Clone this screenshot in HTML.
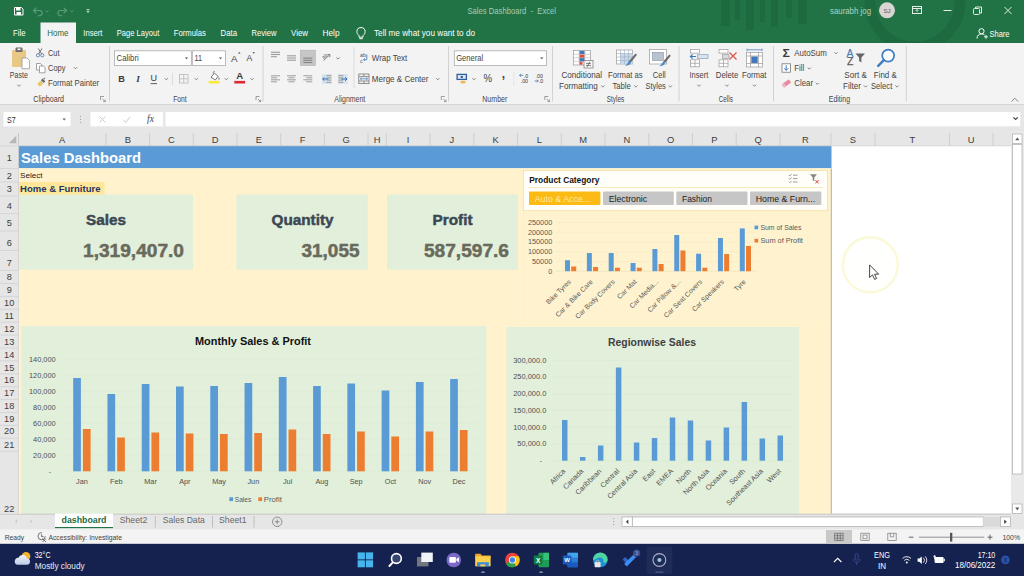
<!DOCTYPE html>
<html lang="en">
<head>
<meta charset="utf-8">
<title>Sales Dashboard - Excel</title>
<style>
html,body{margin:0;padding:0;width:1024px;height:576px;overflow:hidden;background:#fff;}
svg{display:block;font-family:"Liberation Sans",sans-serif;}
text{white-space:pre;}
</style>
</head>
<body>
<svg width="1024" height="576" viewBox="0 0 1024 576">
<!-- p1_skeleton -->
<g id="backgrounds">
<rect x="0" y="0" width="1024" height="43" fill="#217346" />
<rect x="0" y="43" width="1024" height="61.5" fill="#f3f3f3" />
<rect x="0" y="104.5" width="1024" height="26.5" fill="#e6e6e6" />
<rect x="0" y="104" width="1024" height="1" fill="#d6d6d6" />
<rect x="0" y="131" width="1024" height="15.5" fill="#e6e6e6" />
<rect x="0" y="145.8" width="18.5" height="367.7" fill="#e6e6e6" />
<rect x="18.5" y="145.8" width="993" height="367.7" fill="#ffffff" />
<rect x="1011" y="131" width="13" height="382.5" fill="#e9e9e9" />
<rect x="0" y="513.5" width="1024" height="16.2" fill="#e6e6e6" />
<rect x="0" y="529.7" width="1024" height="14.1" fill="#f3f3f3" />
<rect x="0" y="543.8" width="1024" height="32.2" fill="#15224f" />
</g>
<g id="dashboard-blocks">
<rect x="18.5" y="145.8" width="813" height="22.5" fill="#5b9bd5" />
<rect x="18.5" y="168.3" width="813" height="345.5" fill="#fff2cc" />
<rect x="18.5" y="182" width="86" height="14" fill="#ffe699" />
<rect x="19" y="194.5" width="174" height="75.2" fill="#e2efda" />
<rect x="236.4" y="194.5" width="131.3" height="75.2" fill="#e2efda" />
<rect x="387" y="194.5" width="131" height="75.2" fill="#e2efda" />
<rect x="21" y="326" width="465.3" height="187.8" fill="#e2efda" />
<rect x="506.4" y="327" width="292.6" height="186.8" fill="#e2efda" />
</g>
<!-- p2_titlebar -->
<g id="titlebar">
<g opacity="0.07" fill="#000"><rect x="721" y="0" width="9" height="26"/><rect x="735" y="0" width="5" height="20"/><rect x="746" y="0" width="8" height="30"/><rect x="760" y="0" width="5" height="22"/><rect x="771" y="0" width="7" height="27"/><rect x="786" y="0" width="6" height="18"/><rect x="798" y="0" width="9" height="24"/><clipPath id="tbclip"><rect x="0" y="0" width="1024" height="43"/></clipPath><circle cx="915" cy="2" r="45" fill="none" stroke="#000" stroke-width="11" clip-path="url(#tbclip)"/></g>
<g fill="none" stroke="#fff" stroke-width="1"><path d="M14.5 7.5h7l1.5 1.5v6h-8.5z"/></g><rect x="16" y="7.5" width="4.5" height="3" fill="#fff"/><rect x="16.5" y="12" width="4.5" height="3" fill="#fff"/>
<g fill="none" stroke="#5c9c7b" stroke-width="1.1" stroke-linecap="round"><path d="M34 10.5h5.5a2.6 2.6 0 0 1 0 5.2h-1.5"/><path d="M36 8l-2.5 2.5 2.5 2.5"/><path d="M66 10.5h-5.5a2.6 2.6 0 0 0 0 5.2h1.5"/><path d="M64 8l2.5 2.5-2.5 2.5"/></g>
<path d="M45.5 10.5l1.5 1.5 1.5-1.5" fill="none" stroke="#5f9d7d" stroke-width="0.8"/>
<path d="M70.5 10.5l1.5 1.5 1.5-1.5" fill="none" stroke="#5f9d7d" stroke-width="0.8"/>
<rect x="86.5" y="9.3" width="3" height="0.9" fill="#e8f2ec"/><path d="M86.5 11.3h3l-1.5 1.6z" fill="#e8f2ec"/>
<text x="467.5" y="10.6" font-size="8.6" fill="#a8ccb7" text-anchor="start" font-weight="normal" dominant-baseline="central" textLength="88.5" lengthAdjust="spacingAndGlyphs" >Sales Dashboard  -  Excel</text>
<text x="830" y="10.6" font-size="8.6" fill="#b4d3c1" text-anchor="start" font-weight="normal" dominant-baseline="central" textLength="41" lengthAdjust="spacingAndGlyphs" >saurabh jog</text>
<circle cx="887" cy="10.3" r="8" fill="#d9d5d1"/>
<text x="887" y="10.6" font-size="6.2" fill="#5a5a5a" text-anchor="middle" font-weight="normal" dominant-baseline="central" >SJ</text>
<g fill="none" stroke="#e4efe8" stroke-width="1"><rect x="912.5" y="6.5" width="9" height="7"/><path d="M912.5 8.5h9"/><path d="M917 12.2v-2.6M915.6 10.8l1.4-1.4 1.4 1.4" stroke-width="0.8"/><path d="M943.5 10.5h8"/><rect x="973.5" y="8.5" width="6" height="6" rx="1"/><path d="M975.5 8.5v-1.5h6v6h-1.5"/><path d="M1004.5 7l7 7M1011.5 7l-7 7"/></g>
</g>
<g id="ribbon-tabs">
<rect x="40.5" y="22.5" width="35.5" height="21" fill="#f3f3f3" />
<text x="13" y="33" font-size="8.8" fill="#ffffff" text-anchor="start" font-weight="normal" dominant-baseline="central" textLength="12.5" lengthAdjust="spacingAndGlyphs" >File</text>
<text x="47.3" y="33" font-size="8.8" fill="#1f6b41" text-anchor="start" font-weight="normal" dominant-baseline="central" textLength="21.2" lengthAdjust="spacingAndGlyphs" >Home</text>
<text x="83.3" y="33" font-size="8.8" fill="#ffffff" text-anchor="start" font-weight="normal" dominant-baseline="central" textLength="19" lengthAdjust="spacingAndGlyphs" >Insert</text>
<text x="116.8" y="33" font-size="8.8" fill="#ffffff" text-anchor="start" font-weight="normal" dominant-baseline="central" textLength="42.5" lengthAdjust="spacingAndGlyphs" >Page Layout</text>
<text x="173.8" y="33" font-size="8.8" fill="#ffffff" text-anchor="start" font-weight="normal" dominant-baseline="central" textLength="32" lengthAdjust="spacingAndGlyphs" >Formulas</text>
<text x="220.5" y="33" font-size="8.8" fill="#ffffff" text-anchor="start" font-weight="normal" dominant-baseline="central" textLength="16.5" lengthAdjust="spacingAndGlyphs" >Data</text>
<text x="251.5" y="33" font-size="8.8" fill="#ffffff" text-anchor="start" font-weight="normal" dominant-baseline="central" textLength="25" lengthAdjust="spacingAndGlyphs" >Review</text>
<text x="291" y="33" font-size="8.8" fill="#ffffff" text-anchor="start" font-weight="normal" dominant-baseline="central" textLength="17" lengthAdjust="spacingAndGlyphs" >View</text>
<text x="322.5" y="33" font-size="8.8" fill="#ffffff" text-anchor="start" font-weight="normal" dominant-baseline="central" textLength="17" lengthAdjust="spacingAndGlyphs" >Help</text>
<g fill="none" stroke="#fff" stroke-width="1"><path d="M359 35.5c-1.6-1.4-2.1-2.5-2.1-3.8a4.1 4.1 0 0 1 8.2 0c0 1.3-.5 2.4-2.1 3.8v1.7h-4z"/><path d="M359.3 38.7h3.4"/></g>
<text x="374" y="33" font-size="8.8" fill="#ffffff" text-anchor="start" font-weight="normal" dominant-baseline="central" textLength="101" lengthAdjust="spacingAndGlyphs" >Tell me what you want to do</text>
<g fill="none" stroke="#fff" stroke-width="1"><circle cx="981.5" cy="31.2" r="2.6"/><path d="M977 38.5c0-3 2-4.6 4.5-4.6 1.4 0 2.3.4 3 1"/><path d="M984 36.8h4M986 34.8v4" stroke-width="0.9"/></g>
<text x="989.5" y="33.5" font-size="8.8" fill="#ffffff" text-anchor="start" font-weight="normal" dominant-baseline="central" textLength="20" lengthAdjust="spacingAndGlyphs" >Share</text>
</g>
<!-- p3_ribbon -->
<g id="ribbon">
<g id="grp-clipboard">
<rect x="12" y="50" width="14" height="17" rx="1" fill="#e9c886"/><rect x="15.5" y="47.5" width="7" height="4.5" rx="1" fill="#6d6d6d"/><rect x="17.5" y="48.5" width="3" height="1.6" fill="#f3f3f3"/><path d="M22 58h5l2.5 2.5v8.2h-7.5z" fill="#fff" stroke="#8c8c8c" stroke-width="0.7"/>
<text x="18.8" y="75" font-size="8.8" fill="#444444" text-anchor="middle" font-weight="normal" dominant-baseline="central" textLength="18" lengthAdjust="spacingAndGlyphs" >Paste</text>
<path d="M17.4 84.7l1.6 1.6 1.6 -1.6" fill="none" stroke="#666" stroke-width="0.8"/>
<g fill="none" stroke="#5d7fa8" stroke-width="0.9"><circle cx="38" cy="55.3" r="1.6"/><circle cx="42.3" cy="55.3" r="1.6"/></g><path d="M38.6 54l3.4-5.5M41.7 54l-3.4-5.5" stroke="#666" stroke-width="0.9" fill="none"/>
<text x="48" y="52.7" font-size="8.8" fill="#444444" text-anchor="start" font-weight="normal" dominant-baseline="central" textLength="11.5" lengthAdjust="spacingAndGlyphs" >Cut</text>
<g fill="#fff" stroke="#8a8a8a" stroke-width="0.8"><path d="M36.5 63.5h4l1.5 1.5v5h-5.5z"/><path d="M39.5 66h4l1.5 1.5v5.3h-5.5z"/></g>
<text x="48" y="68" font-size="8.8" fill="#444444" text-anchor="start" font-weight="normal" dominant-baseline="central" textLength="17.5" lengthAdjust="spacingAndGlyphs" >Copy</text>
<path d="M73.9 67.2l1.6 1.6 1.6 -1.6" fill="none" stroke="#666" stroke-width="0.8"/>
<path d="M37.200 84l3.300-3.300 2.700 2.700-3.300 3.300z" fill="#e6c862"/><path d="M40.900 80.300l1.700-1.700 2.700 2.700-1.700 1.700z" fill="#6a6a6a"/><path d="M43.700 79.200l1.300-1.300" stroke="#6a6a6a" stroke-width="1.100"/>
<text x="48" y="83.3" font-size="8.8" fill="#444444" text-anchor="start" font-weight="normal" dominant-baseline="central" textLength="51" lengthAdjust="spacingAndGlyphs" >Format Painter</text>
<text x="48.7" y="99" font-size="8.3" fill="#444444" text-anchor="middle" font-weight="normal" dominant-baseline="central" textLength="30.7" lengthAdjust="spacingAndGlyphs" >Clipboard</text>
<g fill="none" stroke="#777" stroke-width="0.7"><path d="M100.5 100v-3.5h3.5"/><path d="M102.5 99l2.5 2.5M105.2 99.6v2h-2"/></g>
<line x1="109.5" y1="46" x2="109.5" y2="101.5" stroke="#d2d2d2" stroke-width="1" />
</g>
<g id="grp-font">
<rect x="114.5" y="50.8" width="76.8" height="14.7" fill="#fff" stroke="#ababab" stroke-width="0.8"/>
<rect x="192.3" y="50.8" width="33.2" height="14.7" fill="#fff" stroke="#ababab" stroke-width="0.8"/>
<text x="116.5" y="58.2" font-size="8.8" fill="#444444" text-anchor="start" font-weight="normal" dominant-baseline="central" textLength="22.3" lengthAdjust="spacingAndGlyphs" >Calibri</text>
<path d="M184.8 57.45h3.4l-1.7 1.7z" fill="#555"/>
<text x="194.5" y="58.2" font-size="8.8" fill="#444444" text-anchor="start" font-weight="normal" dominant-baseline="central" textLength="7.5" lengthAdjust="spacingAndGlyphs" >11</text>
<path d="M218.8 57.45h3.4l-1.7 1.7z" fill="#555"/>
<text x="231" y="58" font-size="9.5" fill="#444444" text-anchor="start" font-weight="normal" dominant-baseline="central" textLength="6.5" lengthAdjust="spacingAndGlyphs" >A</text><path d="M238 53.5l1.3-1.5 1.3 1.5z" fill="#444"/>
<text x="246.5" y="58.4" font-size="8.5" fill="#444444" text-anchor="start" font-weight="normal" dominant-baseline="central" textLength="5.8" lengthAdjust="spacingAndGlyphs" >A</text><path d="M252.5 52.3l1.2 1.4 1.2-1.4z" fill="#444"/>
<text x="121.5" y="78.8" font-size="9.2" fill="#3b3b3b" text-anchor="middle" font-weight="bold" dominant-baseline="central" >B</text>
<text x="138" y="78.8" font-size="9.2" fill="#3b3b3b" text-anchor="middle" font-weight="bold" dominant-baseline="central" font-style="italic" font-family="Liberation Serif, serif">I</text>
<text x="153.8" y="78.3" font-size="9" fill="#3b3b3b" text-anchor="middle" font-weight="normal" dominant-baseline="central" >U</text><rect x="150.6" y="83.3" width="6.4" height="0.8" fill="#3b3b3b" />
<path d="M164.7 78.2l1.6 1.6 1.6 -1.6" fill="none" stroke="#666" stroke-width="0.8"/>
<line x1="172.5" y1="73" x2="172.5" y2="85" stroke="#dcdcdc" stroke-width="1" />
<g fill="none" stroke="#b9b9b9" stroke-width="0.8"><rect x="179.5" y="74.5" width="8.5" height="8.5"/><path d="M183.75 74.5v8.5M179.5 78.75h8.5"/></g>
<path d="M194.7 78.2l1.6 1.6 1.6 -1.6" fill="none" stroke="#666" stroke-width="0.8"/>
<path d="M211 77.300l3.400-4.200 3.700 3.300-2.700 3.500z" fill="#fff" stroke="#666" stroke-width="0.9"/><path d="M213.400 73.500c-.6-1.700.8-2.700 1.500-1.600" fill="none" stroke="#666" stroke-width="0.8"/><path d="M218.900 77.200c.9 1.300 1 2.100.1 2.500-.9-.4-.8-1.200-.1-2.500z" fill="#666"/>
<rect x="208.6" y="80.9" width="10.8" height="2.6" fill="#f7ea3c" />
<path d="M224.7 78.2l1.6 1.6 1.6 -1.6" fill="none" stroke="#666" stroke-width="0.8"/>
<text x="239.7" y="75.6" font-size="9.6" fill="#3b3b3b" text-anchor="middle" font-weight="bold" dominant-baseline="central" >A</text>
<rect x="234.3" y="80.9" width="10.8" height="2.6" fill="#dc2a35" />
<path d="M250.4 78.2l1.6 1.6 1.6 -1.6" fill="none" stroke="#666" stroke-width="0.8"/>
<text x="180" y="99" font-size="8.3" fill="#444444" text-anchor="middle" font-weight="normal" dominant-baseline="central" textLength="13.5" lengthAdjust="spacingAndGlyphs" >Font</text>
<g fill="none" stroke="#777" stroke-width="0.7"><path d="M256 100v-3.5h3.5"/><path d="M258 99l2.5 2.5M260.7 99.6v2h-2"/></g>
<line x1="263" y1="46" x2="263" y2="101.5" stroke="#d2d2d2" stroke-width="1" />
</g>
<g id="grp-alignment">
<rect x="271" y="51.75" width="9" height="1.1" fill="#9d9d9d" /><rect x="271" y="53.95" width="9" height="1.1" fill="#9d9d9d" /><rect x="271" y="56.15" width="6" height="1.1" fill="#9d9d9d" />
<rect x="287" y="55.25" width="9" height="1.1" fill="#9d9d9d" /><rect x="287" y="57.45" width="9" height="1.1" fill="#9d9d9d" /><rect x="287" y="59.65" width="9" height="1.1" fill="#9d9d9d" />
<rect x="300.3" y="50.2" width="15" height="15.3" fill="#c6c6c6" stroke="#b0b0b0" stroke-width="0.6"/>
<rect x="303.3" y="57.55" width="9" height="1.1" fill="#858585" /><rect x="303.3" y="59.75" width="9" height="1.1" fill="#858585" /><rect x="303.3" y="61.95" width="9" height="1.1" fill="#858585" />
<g fill="none" stroke="#666" stroke-width="0.8"><path d="M323.5 60.5l6-5.5"/><path d="M327.5 54.3l2.6.4-.4 2.6"/></g><text x="322.2" y="56.5" font-size="5" fill="#555" text-anchor="start" font-weight="normal" dominant-baseline="central" transform="rotate(-40 324 57)">ab</text>
<path d="M336.4 57.5l1.6 1.6 1.6 -1.6" fill="none" stroke="#666" stroke-width="0.8"/>
<rect x="271" y="75.3" width="9" height="1" fill="#9d9d9d" /><rect x="271" y="77.3" width="6" height="1" fill="#9d9d9d" /><rect x="271" y="79.3" width="9" height="1" fill="#9d9d9d" /><rect x="271" y="81.3" width="6" height="1" fill="#9d9d9d" />
<rect x="287" y="75.3" width="9" height="1" fill="#9d9d9d" /><rect x="288.5" y="77.3" width="6" height="1" fill="#9d9d9d" /><rect x="287" y="79.3" width="9" height="1" fill="#9d9d9d" /><rect x="288.5" y="81.3" width="6" height="1" fill="#9d9d9d" />
<rect x="303.3" y="75.3" width="9" height="1" fill="#9d9d9d" /><rect x="306.3" y="77.3" width="6" height="1" fill="#9d9d9d" /><rect x="303.3" y="79.3" width="9" height="1" fill="#9d9d9d" /><rect x="306.3" y="81.3" width="6" height="1" fill="#9d9d9d" />
<rect x="321.8" y="74" width="10" height="10" fill="#d9e4ef" />
<rect x="326.3" y="75.2" width="5" height="1" fill="#9a9a9a" /><rect x="326.3" y="77.4" width="5" height="1" fill="#9a9a9a" /><rect x="326.3" y="79.6" width="5" height="1" fill="#9a9a9a" /><rect x="326.3" y="81.8" width="5" height="1" fill="#9a9a9a" />
<path d="M328.3 79h-5.5M324.5 77.2l-1.9 1.8 1.9 1.8" stroke="#2f6fb3" stroke-width="1" fill="none"/>
<rect x="337.8" y="74" width="10" height="10" fill="#d9e4ef" />
<rect x="338.3" y="75.2" width="5" height="1" fill="#9a9a9a" /><rect x="338.3" y="77.4" width="5" height="1" fill="#9a9a9a" /><rect x="338.3" y="79.6" width="5" height="1" fill="#9a9a9a" /><rect x="338.3" y="81.8" width="5" height="1" fill="#9a9a9a" />
<path d="M341.3 79h5.5M345.1 77.2l1.9 1.8-1.9 1.8" stroke="#2f6fb3" stroke-width="1" fill="none"/>
<line x1="354" y1="47" x2="354" y2="88" stroke="#dcdcdc" stroke-width="1" />
<text x="360" y="55.3" font-size="5.4" fill="#555" text-anchor="start" font-weight="normal" dominant-baseline="central" >ab</text><text x="360" y="60.6" font-size="5.4" fill="#555" text-anchor="start" font-weight="normal" dominant-baseline="central" >c</text><path d="M366.8 54.5v5.2h-3M365 58.3l-1.5 1.4 1.5 1.4" fill="none" stroke="#3a76b8" stroke-width="0.8"/>
<text x="371.8" y="58.2" font-size="8.8" fill="#444444" text-anchor="start" font-weight="normal" dominant-baseline="central" textLength="35.5" lengthAdjust="spacingAndGlyphs" >Wrap Text</text>
<g fill="none" stroke="#777" stroke-width="0.8"><rect x="358.8" y="74" width="10.2" height="9.6"/><path d="M358.8 76.6h10.2M358.8 81h10.2M363.9 74v2.6M363.9 81v2.6"/></g><path d="M360.3 78.8h7.2M361.6 77.6l-1.3 1.2 1.3 1.2M366.2 77.6l1.3 1.2-1.3 1.2" stroke="#3a76b8" stroke-width="0.7" fill="none"/>
<text x="371.8" y="78.8" font-size="8.8" fill="#444444" text-anchor="start" font-weight="normal" dominant-baseline="central" textLength="56.7" lengthAdjust="spacingAndGlyphs" >Merge &amp; Center</text>
<path d="M436.2 78.2l1.6 1.6 1.6 -1.6" fill="none" stroke="#666" stroke-width="0.8"/>
<text x="349.8" y="99" font-size="8.3" fill="#444444" text-anchor="middle" font-weight="normal" dominant-baseline="central" textLength="31" lengthAdjust="spacingAndGlyphs" >Alignment</text>
<g fill="none" stroke="#777" stroke-width="0.7"><path d="M441.3 100v-3.5h3.5"/><path d="M443.3 99l2.5 2.5M446 99.6v2h-2"/></g>
<line x1="448.5" y1="46" x2="448.5" y2="101.5" stroke="#d2d2d2" stroke-width="1" />
</g>
<g id="grp-number">
<rect x="454.3" y="50.8" width="92.2" height="14.7" fill="#fff" stroke="#ababab" stroke-width="0.8"/>
<text x="456.2" y="58.2" font-size="8.8" fill="#444444" text-anchor="start" font-weight="normal" dominant-baseline="central" textLength="27" lengthAdjust="spacingAndGlyphs" >General</text>
<path d="M540.1 57.45h3.4l-1.7 1.7z" fill="#555"/>
<rect x="457.100" y="74.400" width="9.300" height="5" fill="#dfe8f3" stroke="#2f5f9e" stroke-width="1.300"/><circle cx="461.8" cy="76.900" r="1.200" fill="#2f5f9e"/><ellipse cx="463" cy="82.200" rx="2.800" ry="1.400" fill="#efb85a"/>
<path d="M472.4 78.2l1.6 1.6 1.6 -1.6" fill="none" stroke="#666" stroke-width="0.8"/>
<text x="487.8" y="78.3" font-size="11.3" fill="#444444" text-anchor="middle" font-weight="normal" dominant-baseline="central" textLength="8.6" lengthAdjust="spacingAndGlyphs" >%</text>
<text x="503.5" y="74" font-size="12" fill="#444444" text-anchor="middle" font-weight="bold" dominant-baseline="central" >,</text><line x1="513.8" y1="72" x2="513.8" y2="86" stroke="#dedede" stroke-width="0.8" />
<path d="M523.2 75.3h-3.6M521 73.9l-1.5 1.4 1.5 1.4" fill="none" stroke="#3a76b8" stroke-width="0.8"/><text x="523.8" y="75.6" font-size="5.2" fill="#333" text-anchor="start" font-weight="normal" dominant-baseline="central" >.0</text><text x="520.8" y="81.2" font-size="5.2" fill="#333" text-anchor="start" font-weight="normal" dominant-baseline="central" >.00</text>
<text x="535.6" y="75.6" font-size="5.2" fill="#333" text-anchor="start" font-weight="normal" dominant-baseline="central" >.00</text><path d="M534.6 81h3.6M536.8 79.600l1.5 1.4-1.5 1.4" fill="none" stroke="#3a76b8" stroke-width="0.8"/><text x="538.8" y="81.2" font-size="5.2" fill="#333" text-anchor="start" font-weight="normal" dominant-baseline="central" >.0</text>
<text x="494.8" y="99" font-size="8.3" fill="#444444" text-anchor="middle" font-weight="normal" dominant-baseline="central" textLength="25" lengthAdjust="spacingAndGlyphs" >Number</text>
<g fill="none" stroke="#777" stroke-width="0.7"><path d="M544.8 100v-3.5h3.5"/><path d="M546.8 99l2.5 2.5M549.5 99.6v2h-2"/></g>
<line x1="552.5" y1="46" x2="552.5" y2="101.5" stroke="#d2d2d2" stroke-width="1" />
</g>
<g id="grp-styles">
<g><rect x="573.5" y="50.5" width="17" height="14.5" fill="#fff" stroke="#9a9a9a" stroke-width="0.7"/><path d="M573.5 54.2h17M573.5 57.8h17M573.5 61.4h17M579.2 50.5v14.5M584.9 50.5v14.5" stroke="#b5b5b5" stroke-width="0.6"/><rect x="579.5" y="50.8" width="5" height="3.2" fill="#3f78bd"/><rect x="579.5" y="54.5" width="5" height="3.2" fill="#d5553f"/><rect x="579.5" y="58.1" width="5" height="3.2" fill="#3f78bd"/><rect x="579.5" y="61.7" width="3" height="3" fill="#d5553f"/><rect x="584" y="60.5" width="9" height="7.5" fill="#f7f7f7" stroke="#777" stroke-width="0.7"/><path d="M586 63.4h5M586 65.4h5M589.8 61.8l-2.6 5" stroke="#555" stroke-width="0.7"/></g>
<text x="561.5" y="75" font-size="8.8" fill="#444444" text-anchor="start" font-weight="normal" dominant-baseline="central" textLength="40.5" lengthAdjust="spacingAndGlyphs" >Conditional</text>
<text x="559" y="85.8" font-size="8.8" fill="#444444" text-anchor="start" font-weight="normal" dominant-baseline="central" textLength="38.8" lengthAdjust="spacingAndGlyphs" >Formatting</text>
<path d="M601.2 85.5l1.6 1.6 1.6 -1.6" fill="none" stroke="#666" stroke-width="0.8"/>
<g><rect x="616.5" y="50" width="16" height="14" fill="#fff" stroke="#9a9a9a" stroke-width="0.7"/><rect x="620.5" y="53.5" width="12" height="10.5" fill="#c9d9ea"/><path d="M616.5 53.5h16M616.5 57h16M616.5 60.5h16M620.5 50v14M624.5 50v14M628.5 50v14" stroke="#9fb0c4" stroke-width="0.6"/><path d="M635.5 53.5l1.5 1.3-6.2 7.6-1.8-1.4z" fill="#6b6b6b"/><path d="M629.2 60.8l1.9 1.6c-1 2.2-3.4 3.4-6.1 3.3 1.8-.9 2.6-2.8 4.2-4.9z" fill="#4a8ac9"/></g>
<text x="608" y="75" font-size="8.8" fill="#444444" text-anchor="start" font-weight="normal" dominant-baseline="central" textLength="34.5" lengthAdjust="spacingAndGlyphs" >Format as</text>
<text x="612.5" y="85.8" font-size="8.8" fill="#444444" text-anchor="start" font-weight="normal" dominant-baseline="central" textLength="18.3" lengthAdjust="spacingAndGlyphs" >Table</text>
<path d="M634.2 85.5l1.6 1.6 1.6 -1.6" fill="none" stroke="#666" stroke-width="0.8"/>
<g><rect x="649.5" y="49.5" width="17" height="14.5" fill="#fff" stroke="#9a9a9a" stroke-width="0.7"/><rect x="652.5" y="52.3" width="11" height="8.3" fill="#b9c3cf" stroke="#8896a6" stroke-width="0.6"/><path d="M669.3 54.5l1.5 1.3-5.8 7.2-1.8-1.4z" fill="#6b6b6b"/><path d="M663.3 61.4l1.9 1.6c-1 2.2-3.4 3.4-6.1 3.3 1.8-.9 2.6-2.8 4.2-4.9z" fill="#4a8ac9"/></g>
<text x="652.8" y="75" font-size="8.8" fill="#444444" text-anchor="start" font-weight="normal" dominant-baseline="central" textLength="13" lengthAdjust="spacingAndGlyphs" >Cell</text>
<text x="645.5" y="85.8" font-size="8.8" fill="#444444" text-anchor="start" font-weight="normal" dominant-baseline="central" textLength="20.3" lengthAdjust="spacingAndGlyphs" >Styles</text>
<path d="M668.7 85.5l1.6 1.6 1.6 -1.6" fill="none" stroke="#666" stroke-width="0.8"/>
<text x="615.5" y="99" font-size="8.3" fill="#444444" text-anchor="middle" font-weight="normal" dominant-baseline="central" textLength="17.5" lengthAdjust="spacingAndGlyphs" >Styles</text>
<line x1="679" y1="46" x2="679" y2="101.5" stroke="#d2d2d2" stroke-width="1" />
</g>
<g id="grp-cells">
<g fill="#fff" stroke="#9a9a9a" stroke-width="0.7"><rect x="690.5" y="49.5" width="9" height="3.6"/><rect x="690.5" y="59.8" width="9" height="7"/><path d="M690.5 63.3h9M695 59.8v7" fill="none"/><rect x="697.5" y="54.7" width="10.5" height="3.6" fill="#dbe5f0" stroke="#7f9cc0"/></g><path d="M696 56.5h-5.6M692.6 54.4l-2.2 2.1 2.2 2.1" fill="none" stroke="#3a76b8" stroke-width="1.1"/>
<text x="689.5" y="75" font-size="8.8" fill="#444444" text-anchor="start" font-weight="normal" dominant-baseline="central" textLength="18.8" lengthAdjust="spacingAndGlyphs" >Insert</text>
<path d="M697.4 84.7l1.6 1.6 1.6 -1.6" fill="none" stroke="#666" stroke-width="0.8"/>
<g fill="#fff" stroke="#9a9a9a" stroke-width="0.7"><rect x="719" y="49.5" width="9" height="3.6"/><rect x="719" y="59.8" width="9" height="7"/><path d="M719 63.3h9M723.5 59.8v7" fill="none"/><rect x="722.5" y="54.7" width="6.5" height="3.6" fill="#dcdcdc" stroke="#9a9a9a"/></g><path d="M729.5 52.5l7 7M736.5 52.5l-7 7" fill="none" stroke="#d9534a" stroke-width="1.2"/>
<text x="715.8" y="75" font-size="8.8" fill="#444444" text-anchor="start" font-weight="normal" dominant-baseline="central" textLength="22.5" lengthAdjust="spacingAndGlyphs" >Delete</text>
<path d="M725.4 84.7l1.6 1.6 1.6 -1.6" fill="none" stroke="#666" stroke-width="0.8"/>
<g fill="#fff" stroke="#9a9a9a" stroke-width="0.7"><rect x="746.5" y="52.5" width="16" height="14.5"/><path d="M746.5 56h16M746.5 63.5h16M750.5 52.5v14.5M758.5 52.5v14.5" fill="none"/></g><rect x="751.3" y="56.5" width="6.4" height="6.5" fill="#3f78bd"/><path d="M747 49.8h15M747 48.6v2.4M762 48.6v2.4" stroke="#3a76b8" stroke-width="0.7" fill="none"/>
<text x="742" y="75" font-size="8.8" fill="#444444" text-anchor="start" font-weight="normal" dominant-baseline="central" textLength="24.5" lengthAdjust="spacingAndGlyphs" >Format</text>
<path d="M752.9 84.7l1.6 1.6 1.6 -1.6" fill="none" stroke="#666" stroke-width="0.8"/>
<text x="725.8" y="99" font-size="8.3" fill="#444444" text-anchor="middle" font-weight="normal" dominant-baseline="central" textLength="14" lengthAdjust="spacingAndGlyphs" >Cells</text>
<line x1="773.5" y1="46" x2="773.5" y2="101.5" stroke="#d2d2d2" stroke-width="1" />
</g>
<g id="grp-editing">
<text x="786.2" y="52.6" font-size="11.5" fill="#3b3b3b" text-anchor="middle" font-weight="bold" dominant-baseline="central" textLength="7.4" lengthAdjust="spacingAndGlyphs" >Σ</text>
<text x="794.3" y="52.7" font-size="8.8" fill="#444444" text-anchor="start" font-weight="normal" dominant-baseline="central" textLength="32.5" lengthAdjust="spacingAndGlyphs" >AutoSum</text>
<path d="M834.4 52.2l1.6 1.6 1.6 -1.6" fill="none" stroke="#666" stroke-width="0.8"/>
<rect x="782" y="63.8" width="8.4" height="8.4" fill="#fff" stroke="#777" stroke-width="0.8"/><path d="M786.2 65.3v5M784.2 68.3l2 2 2-2" fill="none" stroke="#3a76b8" stroke-width="1"/>
<text x="794.3" y="68" font-size="8.8" fill="#444444" text-anchor="start" font-weight="normal" dominant-baseline="central" textLength="10" lengthAdjust="spacingAndGlyphs" >Fill</text>
<path d="M807.7 67.5l1.6 1.6 1.6 -1.6" fill="none" stroke="#666" stroke-width="0.8"/>
<g transform="translate(786.4 83.5) rotate(-36)"><rect x="-4.500" y="-2" width="9" height="4" rx="0.9" fill="#e78aa2"/><rect x="-4.500" y="-2" width="2.600" height="4" rx="0.9" fill="#f0b9c6"/></g>
<text x="794.3" y="83.3" font-size="8.8" fill="#444444" text-anchor="start" font-weight="normal" dominant-baseline="central" textLength="18.7" lengthAdjust="spacingAndGlyphs" >Clear</text>
<path d="M815.7 82.8l1.6 1.6 1.6 -1.6" fill="none" stroke="#666" stroke-width="0.8"/>
<text x="846.6" y="53.5" font-size="10.4" fill="#4f7fb5" text-anchor="start" font-weight="normal" dominant-baseline="central" stroke="#4f7fb5" stroke-width="0.25">A</text><text x="847" y="61.9" font-size="10.4" fill="#5a5a5a" text-anchor="start" font-weight="normal" dominant-baseline="central" stroke="#5a5a5a" stroke-width="0.25">Z</text>
<path d="M855.5 53.5h9.5l-3.6 4v5l-2.3-1.4v-3.6z" fill="#666"/>
<text x="844.3" y="75" font-size="8.8" fill="#444444" text-anchor="start" font-weight="normal" dominant-baseline="central" textLength="22.5" lengthAdjust="spacingAndGlyphs" >Sort &amp;</text>
<text x="843" y="85.8" font-size="8.8" fill="#444444" text-anchor="start" font-weight="normal" dominant-baseline="central" textLength="18" lengthAdjust="spacingAndGlyphs" >Filter</text>
<path d="M864 85.5l1.6 1.6 1.6 -1.6" fill="none" stroke="#666" stroke-width="0.8"/>
<circle cx="888.2" cy="55.6" r="6" fill="#fbfdff" stroke="#3f7cc0" stroke-width="1.7"/><path d="M883.800 60.200l-5.600 5.600" stroke="#3f7cc0" stroke-width="2.5" stroke-linecap="round"/>
<text x="873.8" y="75" font-size="8.8" fill="#444444" text-anchor="start" font-weight="normal" dominant-baseline="central" textLength="23" lengthAdjust="spacingAndGlyphs" >Find &amp;</text>
<text x="871" y="85.8" font-size="8.8" fill="#444444" text-anchor="start" font-weight="normal" dominant-baseline="central" textLength="21.3" lengthAdjust="spacingAndGlyphs" >Select</text>
<path d="M895.4 85.5l1.6 1.6 1.6 -1.6" fill="none" stroke="#666" stroke-width="0.8"/>
<text x="839.4" y="99" font-size="8.3" fill="#444444" text-anchor="middle" font-weight="normal" dominant-baseline="central" textLength="21.2" lengthAdjust="spacingAndGlyphs" >Editing</text>
<line x1="906.3" y1="46" x2="906.3" y2="101.5" stroke="#d2d2d2" stroke-width="1" />
<path d="M1011.5 101.5l3.3-3.3 3.3 3.3" fill="none" stroke="#666" stroke-width="0.8"/>
</g>
</g>
<!-- p4_grid -->
<g id="formula-bar">
<rect x="3.5" y="112" width="67" height="14.3" fill="#fff" />
<text x="7" y="119.5" font-size="8.6" fill="#333" text-anchor="start" font-weight="normal" dominant-baseline="central" textLength="8.8" lengthAdjust="spacingAndGlyphs" >S7</text>
<path d="M62.4 118.6h3.6l-1.8 2z" fill="#666"/>
<circle cx="80.5" cy="116.3" r="0.6" fill="#9a9a9a"/>
<circle cx="80.5" cy="119.3" r="0.6" fill="#9a9a9a"/>
<circle cx="80.5" cy="122.3" r="0.6" fill="#9a9a9a"/>
<rect x="90.5" y="112" width="72.5" height="14.3" fill="#fff" />
<path d="M99.5 116.5l6 6M105.5 116.5l-6 6" stroke="#c6c6c6" stroke-width="0.9" fill="none"/>
<path d="M123.3 119.8l2.3 2.6 4.6-5.6" stroke="#c6c6c6" stroke-width="0.9" fill="none"/>
<text x="150.5" y="119.3" font-size="9.5" fill="#444" text-anchor="middle" font-weight="normal" dominant-baseline="central" font-style="italic" font-family="Liberation Serif, serif">fx</text>
<rect x="165.5" y="112" width="854.8" height="14.3" fill="#fff" />
<path d="M1013.4 117.3l2.2 2.2 2.2-2.2" stroke="#444" stroke-width="1.2" fill="none"/>
</g>
<g id="col-headers">
<path d="M16.3 135.8v7.4h-7.4z" fill="#b7b7b7"/>
<line x1="18.5" y1="133" x2="18.5" y2="146.5" stroke="#c8c8c8" stroke-width="1" />
<text x="62.25" y="139" font-size="9.4" fill="#3d3d3d" text-anchor="middle" font-weight="normal" dominant-baseline="central" >A</text>
<line x1="106" y1="133" x2="106" y2="145.8" stroke="#c8c8c8" stroke-width="0.8" />
<text x="127.8" y="139" font-size="9.4" fill="#3d3d3d" text-anchor="middle" font-weight="normal" dominant-baseline="central" >B</text>
<line x1="149.6" y1="133" x2="149.6" y2="145.8" stroke="#c8c8c8" stroke-width="0.8" />
<text x="171.45" y="139" font-size="9.4" fill="#3d3d3d" text-anchor="middle" font-weight="normal" dominant-baseline="central" >C</text>
<line x1="193.3" y1="133" x2="193.3" y2="145.8" stroke="#c8c8c8" stroke-width="0.8" />
<text x="215.15" y="139" font-size="9.4" fill="#3d3d3d" text-anchor="middle" font-weight="normal" dominant-baseline="central" >D</text>
<line x1="237" y1="133" x2="237" y2="145.8" stroke="#c8c8c8" stroke-width="0.8" />
<text x="258.85" y="139" font-size="9.4" fill="#3d3d3d" text-anchor="middle" font-weight="normal" dominant-baseline="central" >E</text>
<line x1="280.7" y1="133" x2="280.7" y2="145.8" stroke="#c8c8c8" stroke-width="0.8" />
<text x="302.55" y="139" font-size="9.4" fill="#3d3d3d" text-anchor="middle" font-weight="normal" dominant-baseline="central" >F</text>
<line x1="324.4" y1="133" x2="324.4" y2="145.8" stroke="#c8c8c8" stroke-width="0.8" />
<text x="346.2" y="139" font-size="9.4" fill="#3d3d3d" text-anchor="middle" font-weight="normal" dominant-baseline="central" >G</text>
<line x1="368" y1="133" x2="368" y2="145.8" stroke="#c8c8c8" stroke-width="0.8" />
<text x="377.15" y="139" font-size="9.4" fill="#3d3d3d" text-anchor="middle" font-weight="normal" dominant-baseline="central" >H</text>
<line x1="386.3" y1="133" x2="386.3" y2="145.8" stroke="#c8c8c8" stroke-width="0.8" />
<text x="408.15" y="139" font-size="9.4" fill="#3d3d3d" text-anchor="middle" font-weight="normal" dominant-baseline="central" >I</text>
<line x1="430" y1="133" x2="430" y2="145.8" stroke="#c8c8c8" stroke-width="0.8" />
<text x="451.9" y="139" font-size="9.4" fill="#3d3d3d" text-anchor="middle" font-weight="normal" dominant-baseline="central" >J</text>
<line x1="473.8" y1="133" x2="473.8" y2="145.8" stroke="#c8c8c8" stroke-width="0.8" />
<text x="495.65" y="139" font-size="9.4" fill="#3d3d3d" text-anchor="middle" font-weight="normal" dominant-baseline="central" >K</text>
<line x1="517.5" y1="133" x2="517.5" y2="145.8" stroke="#c8c8c8" stroke-width="0.8" />
<text x="539.4" y="139" font-size="9.4" fill="#3d3d3d" text-anchor="middle" font-weight="normal" dominant-baseline="central" >L</text>
<line x1="561.3" y1="133" x2="561.3" y2="145.8" stroke="#c8c8c8" stroke-width="0.8" />
<text x="583.15" y="139" font-size="9.4" fill="#3d3d3d" text-anchor="middle" font-weight="normal" dominant-baseline="central" >M</text>
<line x1="605" y1="133" x2="605" y2="145.8" stroke="#c8c8c8" stroke-width="0.8" />
<text x="626.9" y="139" font-size="9.4" fill="#3d3d3d" text-anchor="middle" font-weight="normal" dominant-baseline="central" >N</text>
<line x1="648.8" y1="133" x2="648.8" y2="145.8" stroke="#c8c8c8" stroke-width="0.8" />
<text x="670.65" y="139" font-size="9.4" fill="#3d3d3d" text-anchor="middle" font-weight="normal" dominant-baseline="central" >O</text>
<line x1="692.5" y1="133" x2="692.5" y2="145.8" stroke="#c8c8c8" stroke-width="0.8" />
<text x="714.35" y="139" font-size="9.4" fill="#3d3d3d" text-anchor="middle" font-weight="normal" dominant-baseline="central" >P</text>
<line x1="736.2" y1="133" x2="736.2" y2="145.8" stroke="#c8c8c8" stroke-width="0.8" />
<text x="758.1" y="139" font-size="9.4" fill="#3d3d3d" text-anchor="middle" font-weight="normal" dominant-baseline="central" >Q</text>
<line x1="780" y1="133" x2="780" y2="145.8" stroke="#c8c8c8" stroke-width="0.8" />
<text x="805.5" y="139" font-size="9.4" fill="#3d3d3d" text-anchor="middle" font-weight="normal" dominant-baseline="central" >R</text>
<line x1="831" y1="133" x2="831" y2="145.8" stroke="#c8c8c8" stroke-width="0.8" />
<text x="853" y="139" font-size="9.4" fill="#3d3d3d" text-anchor="middle" font-weight="normal" dominant-baseline="central" >S</text>
<line x1="875" y1="133" x2="875" y2="145.8" stroke="#c8c8c8" stroke-width="0.8" />
<text x="912.25" y="139" font-size="9.4" fill="#3d3d3d" text-anchor="middle" font-weight="normal" dominant-baseline="central" >T</text>
<line x1="949.5" y1="133" x2="949.5" y2="145.8" stroke="#c8c8c8" stroke-width="0.8" />
<text x="971.25" y="139" font-size="9.4" fill="#3d3d3d" text-anchor="middle" font-weight="normal" dominant-baseline="central" >U</text>
<line x1="993" y1="133" x2="993" y2="145.8" stroke="#c8c8c8" stroke-width="0.8" />
<line x1="0" y1="145.8" x2="1011" y2="145.8" stroke="#cfcfcf" stroke-width="0.8" />
</g>
<g id="row-headers">
<text x="9.2" y="158" font-size="9.2" fill="#3d3d3d" text-anchor="middle" font-weight="normal" dominant-baseline="central" >1</text>
<text x="9.2" y="175.5" font-size="9.2" fill="#3d3d3d" text-anchor="middle" font-weight="normal" dominant-baseline="central" >2</text>
<text x="9.2" y="189" font-size="9.2" fill="#3d3d3d" text-anchor="middle" font-weight="normal" dominant-baseline="central" >3</text>
<text x="9.2" y="206" font-size="9.2" fill="#3d3d3d" text-anchor="middle" font-weight="normal" dominant-baseline="central" >4</text>
<text x="9.2" y="223" font-size="9.2" fill="#3d3d3d" text-anchor="middle" font-weight="normal" dominant-baseline="central" >5</text>
<text x="9.2" y="243" font-size="9.2" fill="#3d3d3d" text-anchor="middle" font-weight="normal" dominant-baseline="central" >6</text>
<text x="9.2" y="263" font-size="9.2" fill="#3d3d3d" text-anchor="middle" font-weight="normal" dominant-baseline="central" >7</text>
<text x="9.2" y="277" font-size="9.2" fill="#3d3d3d" text-anchor="middle" font-weight="normal" dominant-baseline="central" >8</text>
<text x="9.2" y="290" font-size="9.2" fill="#3d3d3d" text-anchor="middle" font-weight="normal" dominant-baseline="central" >9</text>
<text x="9.2" y="303" font-size="9.2" fill="#3d3d3d" text-anchor="middle" font-weight="normal" dominant-baseline="central" >10</text>
<text x="9.2" y="316" font-size="9.2" fill="#3d3d3d" text-anchor="middle" font-weight="normal" dominant-baseline="central" >11</text>
<text x="9.2" y="329" font-size="9.2" fill="#3d3d3d" text-anchor="middle" font-weight="normal" dominant-baseline="central" >12</text>
<text x="9.2" y="342" font-size="9.2" fill="#3d3d3d" text-anchor="middle" font-weight="normal" dominant-baseline="central" >13</text>
<text x="9.2" y="354.8" font-size="9.2" fill="#3d3d3d" text-anchor="middle" font-weight="normal" dominant-baseline="central" >14</text>
<text x="9.2" y="367.6" font-size="9.2" fill="#3d3d3d" text-anchor="middle" font-weight="normal" dominant-baseline="central" >15</text>
<text x="9.2" y="380.4" font-size="9.2" fill="#3d3d3d" text-anchor="middle" font-weight="normal" dominant-baseline="central" >16</text>
<text x="9.2" y="393" font-size="9.2" fill="#3d3d3d" text-anchor="middle" font-weight="normal" dominant-baseline="central" >17</text>
<text x="9.2" y="405.8" font-size="9.2" fill="#3d3d3d" text-anchor="middle" font-weight="normal" dominant-baseline="central" >18</text>
<text x="9.2" y="418.6" font-size="9.2" fill="#3d3d3d" text-anchor="middle" font-weight="normal" dominant-baseline="central" >19</text>
<text x="9.2" y="431.4" font-size="9.2" fill="#3d3d3d" text-anchor="middle" font-weight="normal" dominant-baseline="central" >20</text>
<text x="9.2" y="444.6" font-size="9.2" fill="#3d3d3d" text-anchor="middle" font-weight="normal" dominant-baseline="central" >21</text>
<text x="9.2" y="508.8" font-size="9.2" fill="#3d3d3d" text-anchor="middle" font-weight="normal" dominant-baseline="central" >22</text>
<line x1="0" y1="168.5" x2="18.5" y2="168.5" stroke="#cfcfcf" stroke-width="0.7" />
<line x1="0" y1="182" x2="18.5" y2="182" stroke="#cfcfcf" stroke-width="0.7" />
<line x1="0" y1="196" x2="18.5" y2="196" stroke="#cfcfcf" stroke-width="0.7" />
<line x1="0" y1="213.5" x2="18.5" y2="213.5" stroke="#cfcfcf" stroke-width="0.7" />
<line x1="0" y1="231" x2="18.5" y2="231" stroke="#cfcfcf" stroke-width="0.7" />
<line x1="0" y1="250.5" x2="18.5" y2="250.5" stroke="#cfcfcf" stroke-width="0.7" />
<line x1="0" y1="270.5" x2="18.5" y2="270.5" stroke="#cfcfcf" stroke-width="0.7" />
<line x1="0" y1="283.5" x2="18.5" y2="283.5" stroke="#cfcfcf" stroke-width="0.7" />
<line x1="0" y1="296.4" x2="18.5" y2="296.4" stroke="#cfcfcf" stroke-width="0.7" />
<line x1="0" y1="309.3" x2="18.5" y2="309.3" stroke="#cfcfcf" stroke-width="0.7" />
<line x1="0" y1="322.2" x2="18.5" y2="322.2" stroke="#cfcfcf" stroke-width="0.7" />
<line x1="0" y1="335.1" x2="18.5" y2="335.1" stroke="#cfcfcf" stroke-width="0.7" />
<line x1="0" y1="348" x2="18.5" y2="348" stroke="#cfcfcf" stroke-width="0.7" />
<line x1="0" y1="360.9" x2="18.5" y2="360.9" stroke="#cfcfcf" stroke-width="0.7" />
<line x1="0" y1="373.8" x2="18.5" y2="373.8" stroke="#cfcfcf" stroke-width="0.7" />
<line x1="0" y1="386.7" x2="18.5" y2="386.7" stroke="#cfcfcf" stroke-width="0.7" />
<line x1="0" y1="399.6" x2="18.5" y2="399.6" stroke="#cfcfcf" stroke-width="0.7" />
<line x1="0" y1="412.5" x2="18.5" y2="412.5" stroke="#cfcfcf" stroke-width="0.7" />
<line x1="0" y1="425.4" x2="18.5" y2="425.4" stroke="#cfcfcf" stroke-width="0.7" />
<line x1="0" y1="438.3" x2="18.5" y2="438.3" stroke="#cfcfcf" stroke-width="0.7" />
<line x1="0" y1="451.2" x2="18.5" y2="451.2" stroke="#cfcfcf" stroke-width="0.7" />
<line x1="18.5" y1="146.5" x2="18.5" y2="513.5" stroke="#cfcfcf" stroke-width="0.8" />
</g>
<g id="vscroll">
<rect x="1012.5" y="134" width="9.5" height="9.6" fill="#fff" stroke="#ababab" stroke-width="0.7"/>
<path d="M1015.2 140.2h4.2l-2.1-2.6z" fill="#555"/>
<rect x="1012.5" y="144.3" width="9.5" height="329.7" fill="#fff" stroke="#ababab" stroke-width="0.7"/>
<rect x="1012.5" y="504" width="9.5" height="9.5" fill="#fff" stroke="#ababab" stroke-width="0.7"/>
<path d="M1015.2 507.6h4.2l-2.1 2.6z" fill="#555"/>
</g>
<!-- p5_dashboard -->
<g id="dashboard-text">
<text x="21" y="158" font-size="14.5" fill="#ffffff" text-anchor="start" font-weight="bold" dominant-baseline="central" textLength="120" lengthAdjust="spacingAndGlyphs" >Sales Dashboard</text>
<text x="20" y="175.8" font-size="7.6" fill="#222" text-anchor="start" font-weight="normal" dominant-baseline="central" textLength="22.5" lengthAdjust="spacingAndGlyphs" >Select</text>
<text x="20" y="189.3" font-size="8.4" fill="#1f3864" text-anchor="start" font-weight="bold" dominant-baseline="central" textLength="80.5" lengthAdjust="spacingAndGlyphs" >Home &amp; Furniture</text>
<text x="106" y="220" font-size="14.6" fill="#3b4754" text-anchor="middle" font-weight="bold" dominant-baseline="central" textLength="40" lengthAdjust="spacingAndGlyphs" stroke="#3b4754" stroke-width="0.45">Sales</text>
<text x="184" y="250.3" font-size="18.8" fill="#696a5c" text-anchor="end" font-weight="bold" dominant-baseline="central" textLength="101" lengthAdjust="spacingAndGlyphs" stroke="#696a5c" stroke-width="0.5">1,319,407.0</text>
<text x="302.5" y="220" font-size="14.6" fill="#3b4754" text-anchor="middle" font-weight="bold" dominant-baseline="central" textLength="62" lengthAdjust="spacingAndGlyphs" stroke="#3b4754" stroke-width="0.45">Quantity</text>
<text x="359.5" y="250.3" font-size="18.8" fill="#696a5c" text-anchor="end" font-weight="bold" dominant-baseline="central" textLength="58" lengthAdjust="spacingAndGlyphs" stroke="#696a5c" stroke-width="0.5">31,055</text>
<text x="452.5" y="220" font-size="14.6" fill="#3b4754" text-anchor="middle" font-weight="bold" dominant-baseline="central" textLength="40" lengthAdjust="spacingAndGlyphs" stroke="#3b4754" stroke-width="0.45">Profit</text>
<text x="509" y="250.3" font-size="18.8" fill="#696a5c" text-anchor="end" font-weight="bold" dominant-baseline="central" textLength="85" lengthAdjust="spacingAndGlyphs" stroke="#696a5c" stroke-width="0.5">587,597.6</text>
</g>
<g id="slicer">
<rect x="523.5" y="170.5" width="304" height="40.2" fill="#fffef9" stroke="#f3df9e" stroke-width="0.8"/>
<text x="529.3" y="179.9" font-size="8.9" fill="#111" text-anchor="start" font-weight="bold" dominant-baseline="central" textLength="70" lengthAdjust="spacingAndGlyphs" >Product Category</text>
<line x1="528" y1="187.5" x2="823" y2="187.5" stroke="#f3e3ad" stroke-width="0.8" />
<g stroke="#7a7a7a" stroke-width="0.75" fill="none"><path d="M793 175.2h4.5M793 178.6h4.5M793 182h4.5"/><path d="M789 175l.9.9 1.6-1.8M789 178.4l.9.9 1.6-1.8M789 181.8l.9.9 1.6-1.8"/></g>
<path d="M810 174.300h7l-2.700 3.200v3.800l-1.600-1v-2.800z" fill="#858585"/><path d="M815.3 180l3.4 3.4M818.7 180l-3.4 3.4" stroke="#d9453a" stroke-width="1" fill="none"/>
<rect x="529" y="191.5" width="71.4" height="13.5" fill="#fbba14" rx="1"/>
<text x="534.7" y="198.6" font-size="8.6" fill="#fde9a2" text-anchor="start" font-weight="normal" dominant-baseline="central" textLength="55.5" lengthAdjust="spacingAndGlyphs" >Auto &amp; Acce...</text>
<rect x="603" y="191.5" width="70.8" height="13.5" fill="#c6c6c6" rx="1"/>
<text x="608.7" y="198.6" font-size="8.6" fill="#222" text-anchor="start" font-weight="normal" dominant-baseline="central" textLength="38.5" lengthAdjust="spacingAndGlyphs" >Electronic</text>
<rect x="676.3" y="191.5" width="71.2" height="13.5" fill="#c6c6c6" rx="1"/>
<text x="682" y="198.6" font-size="8.6" fill="#222" text-anchor="start" font-weight="normal" dominant-baseline="central" textLength="30" lengthAdjust="spacingAndGlyphs" >Fashion</text>
<rect x="750" y="191.5" width="71.3" height="13.5" fill="#c6c6c6" rx="1"/>
<text x="755.7" y="198.6" font-size="8.6" fill="#222" text-anchor="start" font-weight="normal" dominant-baseline="central" textLength="59.5" lengthAdjust="spacingAndGlyphs" >Home &amp; Furn...</text>
</g>
<g id="pivot-chart">
<rect x="523.5" y="212.5" width="304.5" height="110" fill="#fff3cf" />
<line x1="523.5" y1="212" x2="523.5" y2="322" stroke="#faedc4" stroke-width="0.8" />
<text x="552.3" y="271.2" font-size="7.3" fill="#595959" text-anchor="end" font-weight="normal" dominant-baseline="central" >0</text>
<line x1="556" y1="271.2" x2="757" y2="271.2" stroke="#eadfb8" stroke-width="0.6" />
<text x="552.3" y="261.45" font-size="7.3" fill="#595959" text-anchor="end" font-weight="normal" dominant-baseline="central" >50000</text>
<line x1="556" y1="261.45" x2="757" y2="261.45" stroke="#f6e9bf" stroke-width="0.6" />
<text x="552.3" y="251.7" font-size="7.3" fill="#595959" text-anchor="end" font-weight="normal" dominant-baseline="central" >100000</text>
<line x1="556" y1="251.7" x2="757" y2="251.7" stroke="#f6e9bf" stroke-width="0.6" />
<text x="552.3" y="241.95" font-size="7.3" fill="#595959" text-anchor="end" font-weight="normal" dominant-baseline="central" >150000</text>
<line x1="556" y1="241.95" x2="757" y2="241.95" stroke="#f6e9bf" stroke-width="0.6" />
<text x="552.3" y="232.2" font-size="7.3" fill="#595959" text-anchor="end" font-weight="normal" dominant-baseline="central" >200000</text>
<line x1="556" y1="232.2" x2="757" y2="232.2" stroke="#f6e9bf" stroke-width="0.6" />
<text x="552.3" y="222.45" font-size="7.3" fill="#595959" text-anchor="end" font-weight="normal" dominant-baseline="central" >250000</text>
<line x1="556" y1="222.45" x2="757" y2="222.45" stroke="#f6e9bf" stroke-width="0.6" />
<rect x="565" y="260.2" width="5" height="11" fill="#5b9bd5" />
<rect x="571.2" y="266.5" width="5" height="4.7" fill="#ed7d31" />
<text x="571.5" y="282.2" font-size="6.9" fill="#595959" text-anchor="end" transform="rotate(-45 571.5 282.2)">Bike Tyres</text>
<rect x="586.85" y="253" width="5" height="18.2" fill="#5b9bd5" />
<rect x="593.05" y="267" width="5" height="4.2" fill="#ed7d31" />
<text x="593.35" y="282.2" font-size="6.9" fill="#595959" text-anchor="end" transform="rotate(-45 593.35 282.2)">Car &amp; Bike Care</text>
<rect x="608.7" y="253" width="5" height="18.2" fill="#5b9bd5" />
<rect x="614.9" y="267.7" width="5" height="3.5" fill="#ed7d31" />
<text x="615.2" y="282.2" font-size="6.9" fill="#595959" text-anchor="end" transform="rotate(-45 615.2 282.2)">Car Body Covers</text>
<rect x="630.55" y="263" width="5" height="8.2" fill="#5b9bd5" />
<rect x="636.75" y="267.7" width="5" height="3.5" fill="#ed7d31" />
<text x="637.05" y="282.2" font-size="6.9" fill="#595959" text-anchor="end" transform="rotate(-45 637.05 282.2)">Car Mat</text>
<rect x="652.4" y="249" width="5" height="22.2" fill="#5b9bd5" />
<rect x="658.6" y="264" width="5" height="7.2" fill="#ed7d31" />
<text x="658.9" y="282.2" font-size="6.9" fill="#595959" text-anchor="end" transform="rotate(-45 658.9 282.2)">Car Media...</text>
<rect x="674.25" y="235" width="5" height="36.2" fill="#5b9bd5" />
<rect x="680.45" y="250.5" width="5" height="20.7" fill="#ed7d31" />
<text x="680.75" y="282.2" font-size="6.9" fill="#595959" text-anchor="end" transform="rotate(-45 680.75 282.2)">Car Pillow &amp;...</text>
<rect x="696.1" y="253.7" width="5" height="17.5" fill="#5b9bd5" />
<rect x="702.3" y="267.7" width="5" height="3.5" fill="#ed7d31" />
<text x="702.6" y="282.2" font-size="6.9" fill="#595959" text-anchor="end" transform="rotate(-45 702.6 282.2)">Car Seat Covers</text>
<rect x="717.95" y="238" width="5" height="33.2" fill="#5b9bd5" />
<rect x="724.15" y="254" width="5" height="17.2" fill="#ed7d31" />
<text x="724.45" y="282.2" font-size="6.9" fill="#595959" text-anchor="end" transform="rotate(-45 724.45 282.2)">Car Speakers</text>
<rect x="739.8" y="228.4" width="5" height="42.8" fill="#5b9bd5" />
<rect x="746" y="245.9" width="5" height="25.3" fill="#ed7d31" />
<text x="746.3" y="282.2" font-size="6.9" fill="#595959" text-anchor="end" transform="rotate(-45 746.3 282.2)">Tyre</text>
<rect x="754.5" y="225.6" width="3.7" height="3.7" fill="#5b9bd5" />
<text x="760.4" y="227.6" font-size="6.8" fill="#595959" text-anchor="start" font-weight="normal" dominant-baseline="central" textLength="41" lengthAdjust="spacingAndGlyphs" >Sum of Sales</text>
<rect x="754.5" y="238.8" width="3.7" height="3.7" fill="#ed7d31" />
<text x="760.4" y="240.8" font-size="6.8" fill="#595959" text-anchor="start" font-weight="normal" dominant-baseline="central" textLength="42.5" lengthAdjust="spacingAndGlyphs" >Sum of Profit</text>
</g>
<!-- p6_charts -->
<g id="chart-monthly">
<text x="253" y="341" font-size="11.2" fill="#111" text-anchor="middle" font-weight="bold" dominant-baseline="central" textLength="116" lengthAdjust="spacingAndGlyphs" >Monthly Sales &amp; Profit</text>
<text x="51" y="471.3" font-size="7" fill="#595959" text-anchor="end" font-weight="normal" dominant-baseline="central" >-</text>
<line x1="60" y1="471.3" x2="478" y2="471.3" stroke="#dce8d4" stroke-width="0.6" />
<text x="55.7" y="455.3" font-size="7.4" fill="#505050" text-anchor="end" font-weight="normal" dominant-baseline="central" >20,000</text>
<line x1="60" y1="455.3" x2="478" y2="455.3" stroke="#dce8d4" stroke-width="0.6" />
<text x="55.7" y="439.3" font-size="7.4" fill="#505050" text-anchor="end" font-weight="normal" dominant-baseline="central" >40,000</text>
<line x1="60" y1="439.3" x2="478" y2="439.3" stroke="#dce8d4" stroke-width="0.6" />
<text x="55.7" y="423.3" font-size="7.4" fill="#505050" text-anchor="end" font-weight="normal" dominant-baseline="central" >60,000</text>
<line x1="60" y1="423.3" x2="478" y2="423.3" stroke="#dce8d4" stroke-width="0.6" />
<text x="55.7" y="407.3" font-size="7.4" fill="#505050" text-anchor="end" font-weight="normal" dominant-baseline="central" >80,000</text>
<line x1="60" y1="407.3" x2="478" y2="407.3" stroke="#dce8d4" stroke-width="0.6" />
<text x="55.7" y="391.3" font-size="7.4" fill="#505050" text-anchor="end" font-weight="normal" dominant-baseline="central" >100,000</text>
<line x1="60" y1="391.3" x2="478" y2="391.3" stroke="#dce8d4" stroke-width="0.6" />
<text x="55.7" y="375.3" font-size="7.4" fill="#505050" text-anchor="end" font-weight="normal" dominant-baseline="central" >120,000</text>
<line x1="60" y1="375.3" x2="478" y2="375.3" stroke="#dce8d4" stroke-width="0.6" />
<text x="55.7" y="359.3" font-size="7.4" fill="#505050" text-anchor="end" font-weight="normal" dominant-baseline="central" >140,000</text>
<line x1="60" y1="359.3" x2="478" y2="359.3" stroke="#dce8d4" stroke-width="0.6" />
<rect x="73.2" y="378" width="7.7" height="93.3" fill="#5b9bd5" />
<rect x="82.9" y="429" width="7.7" height="42.3" fill="#ed7d31" />
<text x="82" y="481.8" font-size="7.3" fill="#505050" text-anchor="middle" font-weight="normal" dominant-baseline="central" >Jan</text>
<rect x="107.47" y="394" width="7.7" height="77.3" fill="#5b9bd5" />
<rect x="117.17" y="437.5" width="7.7" height="33.8" fill="#ed7d31" />
<text x="116.27" y="481.8" font-size="7.3" fill="#505050" text-anchor="middle" font-weight="normal" dominant-baseline="central" >Feb</text>
<rect x="141.74" y="384" width="7.7" height="87.3" fill="#5b9bd5" />
<rect x="151.44" y="432.5" width="7.7" height="38.8" fill="#ed7d31" />
<text x="150.54" y="481.8" font-size="7.3" fill="#505050" text-anchor="middle" font-weight="normal" dominant-baseline="central" >Mar</text>
<rect x="176.01" y="386.5" width="7.7" height="84.8" fill="#5b9bd5" />
<rect x="185.71" y="433.5" width="7.7" height="37.8" fill="#ed7d31" />
<text x="184.81" y="481.8" font-size="7.3" fill="#505050" text-anchor="middle" font-weight="normal" dominant-baseline="central" >Apr</text>
<rect x="210.28" y="386" width="7.7" height="85.3" fill="#5b9bd5" />
<rect x="219.98" y="434" width="7.7" height="37.3" fill="#ed7d31" />
<text x="219.08" y="481.8" font-size="7.3" fill="#505050" text-anchor="middle" font-weight="normal" dominant-baseline="central" >May</text>
<rect x="244.55" y="383" width="7.7" height="88.3" fill="#5b9bd5" />
<rect x="254.25" y="433" width="7.7" height="38.3" fill="#ed7d31" />
<text x="253.35" y="481.8" font-size="7.3" fill="#505050" text-anchor="middle" font-weight="normal" dominant-baseline="central" >Jun</text>
<rect x="278.82" y="377" width="7.7" height="94.3" fill="#5b9bd5" />
<rect x="288.52" y="429.5" width="7.7" height="41.8" fill="#ed7d31" />
<text x="287.62" y="481.8" font-size="7.3" fill="#505050" text-anchor="middle" font-weight="normal" dominant-baseline="central" >Jul</text>
<rect x="313.09" y="386" width="7.7" height="85.3" fill="#5b9bd5" />
<rect x="322.79" y="434" width="7.7" height="37.3" fill="#ed7d31" />
<text x="321.89" y="481.8" font-size="7.3" fill="#505050" text-anchor="middle" font-weight="normal" dominant-baseline="central" >Aug</text>
<rect x="347.36" y="383.5" width="7.7" height="87.8" fill="#5b9bd5" />
<rect x="357.06" y="431.5" width="7.7" height="39.8" fill="#ed7d31" />
<text x="356.16" y="481.8" font-size="7.3" fill="#505050" text-anchor="middle" font-weight="normal" dominant-baseline="central" >Sep</text>
<rect x="381.63" y="390.5" width="7.7" height="80.8" fill="#5b9bd5" />
<rect x="391.33" y="436.5" width="7.7" height="34.8" fill="#ed7d31" />
<text x="390.43" y="481.8" font-size="7.3" fill="#505050" text-anchor="middle" font-weight="normal" dominant-baseline="central" >Oct</text>
<rect x="415.9" y="382" width="7.7" height="89.3" fill="#5b9bd5" />
<rect x="425.6" y="431.5" width="7.7" height="39.8" fill="#ed7d31" />
<text x="424.7" y="481.8" font-size="7.3" fill="#505050" text-anchor="middle" font-weight="normal" dominant-baseline="central" >Nov</text>
<rect x="450.17" y="379" width="7.7" height="92.3" fill="#5b9bd5" />
<rect x="459.87" y="430" width="7.7" height="41.3" fill="#ed7d31" />
<text x="458.97" y="481.8" font-size="7.3" fill="#505050" text-anchor="middle" font-weight="normal" dominant-baseline="central" >Dec</text>
<rect x="229.3" y="497.3" width="3.8" height="3.8" fill="#5b9bd5" />
<text x="234.8" y="499.3" font-size="7" fill="#595959" text-anchor="start" font-weight="normal" dominant-baseline="central" textLength="16.5" lengthAdjust="spacingAndGlyphs" >Sales</text>
<rect x="258.3" y="497.3" width="3.8" height="3.8" fill="#ed7d31" />
<text x="263.8" y="499.3" font-size="7" fill="#595959" text-anchor="start" font-weight="normal" dominant-baseline="central" textLength="18" lengthAdjust="spacingAndGlyphs" >Profit</text>
</g>
<g id="chart-region">
<text x="652" y="341.5" font-size="11.2" fill="#404040" text-anchor="middle" font-weight="bold" dominant-baseline="central" textLength="88" lengthAdjust="spacingAndGlyphs" >Regionwise Sales</text>
<text x="542" y="460.7" font-size="7" fill="#595959" text-anchor="end" font-weight="normal" dominant-baseline="central" >-</text>
<line x1="552" y1="460.7" x2="792" y2="460.7" stroke="#dce8d4" stroke-width="0.6" />
<text x="546.3" y="443.95" font-size="7.45" fill="#505050" text-anchor="end" font-weight="normal" dominant-baseline="central" >50,000.0</text>
<line x1="552" y1="443.95" x2="792" y2="443.95" stroke="#dce8d4" stroke-width="0.6" />
<text x="546.3" y="427.2" font-size="7.45" fill="#505050" text-anchor="end" font-weight="normal" dominant-baseline="central" >100,000.0</text>
<line x1="552" y1="427.2" x2="792" y2="427.2" stroke="#dce8d4" stroke-width="0.6" />
<text x="546.3" y="410.45" font-size="7.45" fill="#505050" text-anchor="end" font-weight="normal" dominant-baseline="central" >150,000.0</text>
<line x1="552" y1="410.45" x2="792" y2="410.45" stroke="#dce8d4" stroke-width="0.6" />
<text x="546.3" y="393.7" font-size="7.45" fill="#505050" text-anchor="end" font-weight="normal" dominant-baseline="central" >200,000.0</text>
<line x1="552" y1="393.7" x2="792" y2="393.7" stroke="#dce8d4" stroke-width="0.6" />
<text x="546.3" y="376.95" font-size="7.45" fill="#505050" text-anchor="end" font-weight="normal" dominant-baseline="central" >250,000.0</text>
<line x1="552" y1="376.95" x2="792" y2="376.95" stroke="#dce8d4" stroke-width="0.6" />
<text x="546.3" y="360.2" font-size="7.45" fill="#505050" text-anchor="end" font-weight="normal" dominant-baseline="central" >300,000.0</text>
<line x1="552" y1="360.2" x2="792" y2="360.2" stroke="#dce8d4" stroke-width="0.6" />
<rect x="562" y="420" width="5.5" height="40.7" fill="#5b9bd5" />
<text x="565.95" y="471.7" font-size="7.25" fill="#505050" text-anchor="end" transform="rotate(-45 565.95 471.7)">Africa</text>
<rect x="579.96" y="457" width="5.5" height="3.7" fill="#5b9bd5" />
<text x="583.91" y="471.7" font-size="7.25" fill="#505050" text-anchor="end" transform="rotate(-45 583.91 471.7)">Canada</text>
<rect x="597.92" y="445.5" width="5.5" height="15.2" fill="#5b9bd5" />
<text x="601.87" y="471.7" font-size="7.25" fill="#505050" text-anchor="end" transform="rotate(-45 601.87 471.7)">Caribbean</text>
<rect x="615.88" y="367.5" width="5.5" height="93.2" fill="#5b9bd5" />
<text x="619.83" y="471.7" font-size="7.25" fill="#505050" text-anchor="end" transform="rotate(-45 619.83 471.7)">Central</text>
<rect x="633.84" y="442.5" width="5.5" height="18.2" fill="#5b9bd5" />
<text x="637.79" y="471.7" font-size="7.25" fill="#505050" text-anchor="end" transform="rotate(-45 637.79 471.7)">Central Asia</text>
<rect x="651.8" y="438" width="5.5" height="22.7" fill="#5b9bd5" />
<text x="655.75" y="471.7" font-size="7.25" fill="#505050" text-anchor="end" transform="rotate(-45 655.75 471.7)">East</text>
<rect x="669.76" y="417.5" width="5.5" height="43.2" fill="#5b9bd5" />
<text x="673.71" y="471.7" font-size="7.25" fill="#505050" text-anchor="end" transform="rotate(-45 673.71 471.7)">EMEA</text>
<rect x="687.72" y="420.5" width="5.5" height="40.2" fill="#5b9bd5" />
<text x="691.67" y="471.7" font-size="7.25" fill="#505050" text-anchor="end" transform="rotate(-45 691.67 471.7)">North</text>
<rect x="705.68" y="440.5" width="5.5" height="20.2" fill="#5b9bd5" />
<text x="709.63" y="471.7" font-size="7.25" fill="#505050" text-anchor="end" transform="rotate(-45 709.63 471.7)">North Asia</text>
<rect x="723.64" y="427.5" width="5.5" height="33.2" fill="#5b9bd5" />
<text x="727.59" y="471.7" font-size="7.25" fill="#505050" text-anchor="end" transform="rotate(-45 727.59 471.7)">Oceania</text>
<rect x="741.6" y="402" width="5.5" height="58.7" fill="#5b9bd5" />
<text x="745.55" y="471.7" font-size="7.25" fill="#505050" text-anchor="end" transform="rotate(-45 745.55 471.7)">South</text>
<rect x="759.56" y="438.5" width="5.5" height="22.2" fill="#5b9bd5" />
<text x="763.51" y="471.7" font-size="7.25" fill="#505050" text-anchor="end" transform="rotate(-45 763.51 471.7)">Southeast Asia</text>
<rect x="777.52" y="435.5" width="5.5" height="25.2" fill="#5b9bd5" />
<text x="781.47" y="471.7" font-size="7.25" fill="#505050" text-anchor="end" transform="rotate(-45 781.47 471.7)">West</text>
</g>
<!-- p7_bottom -->
<g id="sheet-tabs">
<rect x="0" y="513.7" width="1011" height="0.9" fill="#c4c4c4" />
<path d="M17 519.5l-2 2 2 2z" fill="#c9c9c9"/><path d="M30.5 519.5l2 2-2 2z" fill="#c9c9c9"/>
<rect x="55" y="513.5" width="58" height="15" fill="#ffffff" />
<rect x="55" y="527" width="58" height="1.2" fill="#217346" />
<text x="84" y="520.2" font-size="9.2" fill="#1e6b41" text-anchor="middle" font-weight="bold" dominant-baseline="central" textLength="45" lengthAdjust="spacingAndGlyphs" >dashboard</text>
<text x="133.5" y="520.2" font-size="9.2" fill="#666" text-anchor="middle" font-weight="normal" dominant-baseline="central" textLength="27.5" lengthAdjust="spacingAndGlyphs" >Sheet2</text>
<line x1="155.3" y1="516" x2="155.3" y2="527.5" stroke="#b5b5b5" stroke-width="0.8" />
<text x="183.8" y="520.2" font-size="9.2" fill="#666" text-anchor="middle" font-weight="normal" dominant-baseline="central" textLength="42" lengthAdjust="spacingAndGlyphs" >Sales Data</text>
<line x1="212.5" y1="516" x2="212.5" y2="527.5" stroke="#b5b5b5" stroke-width="0.8" />
<text x="232.8" y="520.2" font-size="9.2" fill="#666" text-anchor="middle" font-weight="normal" dominant-baseline="central" textLength="27.5" lengthAdjust="spacingAndGlyphs" >Sheet1</text>
<line x1="254" y1="516" x2="254" y2="527.5" stroke="#b5b5b5" stroke-width="0.8" />
<circle cx="277.2" cy="521.8" r="4.7" fill="none" stroke="#777" stroke-width="0.8"/><path d="M274.8 521.8h4.8M277.2 519.4v4.8" stroke="#777" stroke-width="0.8"/>
<circle cx="613.7" cy="518.6" r="0.6" fill="#9a9a9a"/>
<circle cx="613.7" cy="521.6" r="0.6" fill="#9a9a9a"/>
<circle cx="613.7" cy="524.6" r="0.6" fill="#9a9a9a"/>
<rect x="622" y="517" width="10.3" height="9.6" fill="#fff" stroke="#ababab" stroke-width="0.7"/>
<path d="M628.4 519.6v4.4l-2.6-2.2z" fill="#444"/>
<rect x="632.3" y="517" width="351" height="9.6" fill="#fff" stroke="#ababab" stroke-width="0.7"/>
<rect x="983.3" y="517" width="17.2" height="9.6" fill="#dadada" />
<rect x="1000.5" y="517" width="9.8" height="9.6" fill="#fff" stroke="#ababab" stroke-width="0.7"/>
<path d="M1004.2 519.6v4.4l2.6-2.2z" fill="#444"/>
</g>
<g id="status-bar">
<text x="4.7" y="537.2" font-size="7.4" fill="#444" text-anchor="start" font-weight="normal" dominant-baseline="central" textLength="19.3" lengthAdjust="spacingAndGlyphs" >Ready</text>
<circle cx="41.6" cy="536.2" r="3.6" fill="none" stroke="#555" stroke-width="0.8" stroke-dasharray="17 5.6"/><path d="M41.6 534.2v2.4h2M42.5 538.5l3.5 3.5M46 538.5l-3.5 3.5" fill="none" stroke="#555" stroke-width="0.8"/>
<text x="48.4" y="537.2" font-size="7.4" fill="#444" text-anchor="start" font-weight="normal" dominant-baseline="central" textLength="73.6" lengthAdjust="spacingAndGlyphs" >Accessibility: Investigate</text>
<rect x="826" y="530" width="26" height="13.6" fill="#c9c9c9" />
<g fill="none" stroke="#666" stroke-width="0.7"><rect x="834.7" y="533.2" width="8.4" height="7.4"/><path d="M834.7 535.7h8.4M834.7 538.2h8.4M837.5 533.2v7.4M840.3 533.2v7.4"/></g>
<g fill="none" stroke="#777" stroke-width="0.7"><rect x="860.8" y="533.2" width="8.4" height="7.4"/><rect x="863" y="535" width="4" height="3.8"/></g>
<g fill="none" stroke="#777" stroke-width="0.7"><rect x="887.8" y="533.2" width="8.4" height="7.4"/><path d="M890.4 533.2v3.6h3.4v-3.6"/></g>
<line x1="908.8" y1="537.2" x2="913.5" y2="537.2" stroke="#555" stroke-width="0.9" />
<line x1="918.8" y1="537.2" x2="984.3" y2="537.2" stroke="#777" stroke-width="0.8" />
<rect x="950" y="532.8" width="2.3" height="8.8" fill="#555" />
<path d="M987.5 537.2h5M990 534.7v5" stroke="#555" stroke-width="0.9" fill="none"/>
<text x="1002.5" y="537.2" font-size="7.4" fill="#444" text-anchor="start" font-weight="normal" dominant-baseline="central" textLength="17.5" lengthAdjust="spacingAndGlyphs" >100%</text>
</g>
<!-- p8_taskbar -->
<g id="taskbar">
<defs><linearGradient id="cloudg" x1="0" y1="0" x2="0" y2="1"><stop offset="0" stop-color="#eef3fa"/><stop offset="1" stop-color="#bccbe6"/></linearGradient></defs>
<circle cx="26" cy="556.2" r="4.300" fill="#f4b331"/><path d="M17.200 564.800h9.400a3.200 3.200 0 0 0 .4-6.400 4.400 4.400 0 0 0-8.400-.6 3.600 3.600 0 0 0-1.400 7z" fill="url(#cloudg)"/>
<text x="34.7" y="555.2" font-size="8.5" fill="#fff" text-anchor="start" font-weight="normal" dominant-baseline="central" textLength="15.8" lengthAdjust="spacingAndGlyphs" >32°C</text>
<text x="34.7" y="565.6" font-size="8.5" fill="#e8ebf2" text-anchor="start" font-weight="normal" dominant-baseline="central" textLength="50" lengthAdjust="spacingAndGlyphs" >Mostly cloudy</text>
<rect x="357.6" y="552.4" width="7.3" height="7" fill="#46b4ee" />
<rect x="357.6" y="560.3" width="7.3" height="7" fill="#46b4ee" />
<rect x="365.8" y="552.4" width="7.3" height="7" fill="#46b4ee" />
<rect x="365.8" y="560.3" width="7.3" height="7" fill="#46b4ee" />
<circle cx="396.4" cy="558.5" r="4.9" fill="#37446e" stroke="#fff" stroke-width="1.6"/><path d="M392.8 562.4l-3.4 3.6" stroke="#fff" stroke-width="1.9" stroke-linecap="round"/>
<rect x="417" y="557" width="11.5" height="9.4" fill="#73767f" />
<rect x="421.3" y="552.6" width="11.5" height="9.4" fill="#f1f2f5" />
<circle cx="453.8" cy="560" r="7.3" fill="#7b68c8"/><rect x="449.3" y="556.9" width="6.6" height="5.8" rx="1" fill="#fff"/><path d="M456.4 559l2.5-1.7v5l-2.5-1.7z" fill="#fff"/>
<path d="M475.2 553.8h5.2l1.5 1.7h8.7v3h-15.4z" fill="#f0a62b"/><rect x="475.2" y="556.3" width="15.4" height="10" fill="#fbd04c" /><rect x="477" y="562.2" width="11.8" height="4.1" fill="#3f8ddb" /><rect x="480.3" y="564.4" width="5" height="1.9" fill="#fbd04c" />
<rect x="481.2" y="571.6" width="3.6" height="1.2" fill="#a7adbd" rx="0.6"/>
<circle cx="512.4" cy="560" r="7.3" fill="#e8453c"/><path d="M512.4 560l-6.32 3.65a7.3 7.3 0 0 0 6.32 3.65 7.3 7.3 0 0 0 .0 0z" fill="#2ca14b"/><path d="M506.08 563.65a7.3 7.3 0 0 0 10 2.65l-3.68-6.3z" fill="#2ca14b"/><path d="M512.4 560l3.65 6.32a7.3 7.3 0 0 0 2.67-9.97h-7.3z" fill="#fbc116"/><circle cx="512.4" cy="560" r="3.5" fill="#fff"/><circle cx="512.4" cy="560" r="2.7" fill="#3f83ea"/>
<rect x="538.5" y="552.8" width="10.5" height="14.4" fill="#1f9d57" rx="1"/><rect x="543.5" y="552.8" width="5.5" height="7.2" fill="#34c17a" /><rect x="533.8" y="555.6" width="8.6" height="8.8" fill="#107c41" rx="0.8"/>
<text x="538.1" y="560.2" font-size="6.4" fill="#fff" text-anchor="middle" font-weight="bold" dominant-baseline="central" >X</text>
<rect x="539.3" y="571.6" width="3.6" height="1.2" fill="#a7adbd" rx="0.6"/>
<rect x="567.5" y="552.8" width="10.5" height="14.4" fill="#2b7cd3" rx="1"/><rect x="567.5" y="552.8" width="10.5" height="4.8" fill="#41a5ee" /><rect x="567.5" y="562.4" width="10.5" height="4.8" fill="#185abd" /><rect x="562.8" y="555.6" width="8.6" height="8.8" fill="#185abd" rx="0.8"/>
<text x="567.1" y="560.2" font-size="6" fill="#fff" text-anchor="middle" font-weight="bold" dominant-baseline="central" >W</text>
<circle cx="600.3" cy="560" r="7.3" fill="#1f8fd6"/><path d="M593 560a7.3 7.3 0 0 1 14.6-.6c0 2.6-2.2 3.6-4.6 3.2 1.600-2.600-.6-5.400-3.400-5.200-3 .2-5.200 2.800-6.600 2.600z" fill="#4fd6a0"/><rect x="594.6" y="562" width="6" height="5.2" rx="0.8" fill="#e9e9e9"/><rect x="596.2" y="560.3" width="2.8" height="2.6" rx="1.2" fill="none" stroke="#c9c9c9" stroke-width="0.8"/>
<path d="M622.6 559.6l2.600-2.600 4.200 4.200-2.600 2.600z" fill="#2f64c9"/><path d="M626.8 566.4l-2.600-2.600 9.400-9.400 2.600 2.600z" fill="#3e8df2"/><circle cx="636.6" cy="553.200" r="3.6" fill="#3a4f8a"/>
<text x="636.6" y="553.4" font-size="5" fill="#9fb3e6" text-anchor="middle" font-weight="normal" dominant-baseline="central" >3</text>
<rect x="646.6" y="546.5" width="25.8" height="27.5" fill="#1f2c57" rx="2"/>
<circle cx="659.4" cy="560" r="6.400" fill="none" stroke="#a9b3cf" stroke-width="1.1"/><circle cx="659.4" cy="560" r="2.1" fill="#9fc3de"/>
<rect x="655.4" y="571.6" width="8" height="1.1" fill="#4d5a86" rx="0.5"/>
<path d="M834 562l3.700-3.700 3.700 3.700" fill="none" stroke="#fff" stroke-width="1.1"/>
<g fill="none" stroke="#34488c" stroke-width="1"><rect x="855.2" y="553.800" width="3" height="6.400" rx="1.500"/><path d="M853.4 559c0 4.600 6.600 4.600 6.600 0M856.700 562.600v2.400"/></g>
<text x="882.1" y="555.3" font-size="8.7" fill="#fff" text-anchor="middle" font-weight="normal" dominant-baseline="central" textLength="16" lengthAdjust="spacingAndGlyphs" >ENG</text>
<text x="882.1" y="565.9" font-size="8.7" fill="#fff" text-anchor="middle" font-weight="normal" dominant-baseline="central" textLength="8" lengthAdjust="spacingAndGlyphs" >IN</text>
<g fill="none" stroke="#fff" stroke-width="0.9"><path d="M902.6 558.400a6 6 0 0 1 8.400 0M904.200 560.400a3.700 3.700 0 0 1 5.200 0"/></g><circle cx="906.8" cy="562.600" r="1" fill="#fff"/>
<path d="M917.600 558.600h1.800l2.400-2.200v7.600l-2.400-2.200h-1.800z" fill="#fff"/><path d="M923.400 557.800a3.400 3.400 0 0 1 0 4.800M925.200 556.400a5.400 5.400 0 0 1 0 7.600" fill="none" stroke="#fff" stroke-width="0.8"/>
<rect x="934.600" y="557" width="9" height="6" rx="1" fill="#fff"/><rect x="943.600" y="558.700" width="1.200" height="2.600" fill="#fff"/><path d="M934.600 555.200v4M933.300 556.300h2.600" stroke="#fff" stroke-width="0.9"/>
<text x="995.2" y="555.1" font-size="8.7" fill="#fff" text-anchor="end" font-weight="normal" dominant-baseline="central" textLength="17.5" lengthAdjust="spacingAndGlyphs" >17:10</text>
<text x="995.2" y="565.2" font-size="8.7" fill="#fff" text-anchor="end" font-weight="normal" dominant-baseline="central" textLength="40.2" lengthAdjust="spacingAndGlyphs" >18/06/2022</text>
<circle cx="1005.4" cy="559.900" r="4.300" fill="#2c50a8"/>
<text x="1005.4" y="560.1" font-size="5.4" fill="#15224f" text-anchor="middle" font-weight="bold" dominant-baseline="central" >1</text>
</g>
<!-- p9_cursor -->
<line x1="831.3" y1="168.5" x2="831.3" y2="513.5" stroke="#a6a6a6" stroke-width="0.9" />
<g id="cursor">
<circle cx="870.3" cy="264.8" r="27.5" fill="#fffde8" fill-opacity="0.1" stroke="#f7f4b0" stroke-opacity="0.5" stroke-width="2.4"/>
<path transform="translate(869.6 264.9)" d="M0 0V12.6L2.9 10 5 14.5 7 13.6 5 9.3H9.1Z" fill="#fff" stroke="#333" stroke-width="0.9" stroke-linejoin="round"/>
</g>
</svg>
</body>
</html>
